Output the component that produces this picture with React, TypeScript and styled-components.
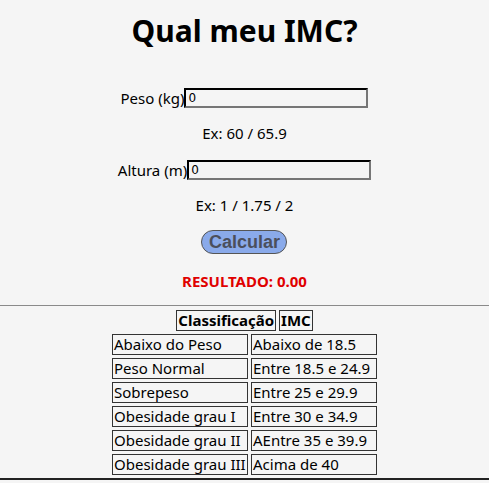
import React, { useState } from 'react'
import styled, { createGlobalStyle } from 'styled-components'

const GlobalStyle = createGlobalStyle`
  html, body {
    margin: 0;
    padding: 0;
    background: #f5f5f5;
    font-family: "Noto Sans", "Open Sans", sans-serif;
    color: #000;
  }
`

const Page = styled.div`
  width: 100%;
  min-height: 483px;
  background: #f5f5f5;
  display: flex;
  flex-direction: column;
  align-items: center;
`

const Title = styled.h1`
  margin: 12px 0 0;
  font-size: 30px;
  line-height: 38px;
  font-weight: 700;
`

const Form = styled.div`
  margin-top: 38px;
  display: flex;
  flex-direction: column;
  align-items: center;
  gap: 16px;
`

const Field = styled.label`
  display: flex;
  align-items: center;
  font-size: 15px;
  line-height: 20px;
  height: 20px;
`

const Input = styled.input`
  box-sizing: border-box;
  width: 184px;
  height: 20px;
  padding: 1px 2px;
  margin: 0;
  border: 2px inset #767676;
  border-top-color: #222;
  border-left-color: #222;
  background: #f5f5f5;
  font-family: "DejaVu Sans", sans-serif;
  font-size: 12px;
  color: #000;
`

const Hint = styled.p`
  margin: -1px 0 1px;
  font-size: 15px;
  line-height: 20px;
  height: 20px;
`

const Button = styled.button`
  box-sizing: border-box;
  width: 86px;
  height: 24px;
  margin-top: -2px;
  padding: 0;
  border: 1px solid #555;
  border-radius: 12px;
  background: #8aaaea;
  color: #4b4f5c;
  font-family: "Liberation Sans", Arial, sans-serif;
  font-weight: 700;
  font-size: 18px;
  line-height: 22px;
`

const Result = styled.p`
  margin: 1px 0 0;
  font-size: 15px;
  line-height: 20px;
  font-weight: 700;
  color: #e00000;
`

const Rule = styled.hr<{ dark?: boolean }>`
  align-self: stretch;
  margin: ${(p) => (p.dark ? '0' : '14px 0 0')};
  border: 0;
  height: ${(p) => (p.dark ? '2px' : '1px')};
  background: ${(p) => (p.dark ? '#222' : '#8a8a8a')};
`

const Table = styled.table`
  border-collapse: separate;
  border-spacing: 3px;
  font-size: 15px;
  line-height: 19px;
`

const HeadTable = styled(Table)`
  margin-top: 1px;
  margin-bottom: -3px;
`

const Th = styled.th`
  border: 1px solid #333;
  padding: 0 1px;
  font-weight: 700;
  text-align: left;
`

const Td = styled.td`
  border: 1px solid #333;
  padding: 0 1px;
  height: 19px;
  text-align: left;
  white-space: nowrap;
`

const Col1 = styled(Td)`
  width: 132px;
`

const Col2 = styled(Td)`
  width: 122px;
`

const rows: [string, string][] = [
  ['Abaixo do Peso', 'Abaixo de 18.5'],
  ['Peso Normal', 'Entre 18.5 e 24.9'],
  ['Sobrepeso', 'Entre 25 e 29.9'],
  ['Obesidade grau I', 'Entre 30 e 34.9'],
  ['Obesidade grau II', 'AEntre 35 e 39.9'],
  ['Obesidade grau III', 'Acima de 40'],
]

export default function App() {
  const [peso, setPeso] = useState('0')
  const [altura, setAltura] = useState('0')

  return (
    <Page>
      <GlobalStyle />
      <Title>Qual meu IMC?</Title>
      <Form>
        <Field>
          Peso (kg)
          <Input value={peso} onChange={(e) => setPeso(e.target.value)} />
        </Field>
        <Hint>Ex: 60 / 65.9</Hint>
        <Field>
          Altura (m)
          <Input value={altura} onChange={(e) => setAltura(e.target.value)} />
        </Field>
        <Hint>Ex: 1 / 1.75 / 2</Hint>
        <Button>Calcular</Button>
        <Result>RESULTADO: 0.00</Result>
      </Form>
      <Rule />
      <HeadTable>
        <thead>
          <tr>
            <Th>Classificação</Th>
            <Th>IMC</Th>
          </tr>
        </thead>
      </HeadTable>
      <Table>
        <tbody>
          {rows.map(([c, v]) => (
            <tr key={c}>
              <Col1>{c}</Col1>
              <Col2>{v}</Col2>
            </tr>
          ))}
        </tbody>
      </Table>
      <Rule dark />
    </Page>
  )
}
